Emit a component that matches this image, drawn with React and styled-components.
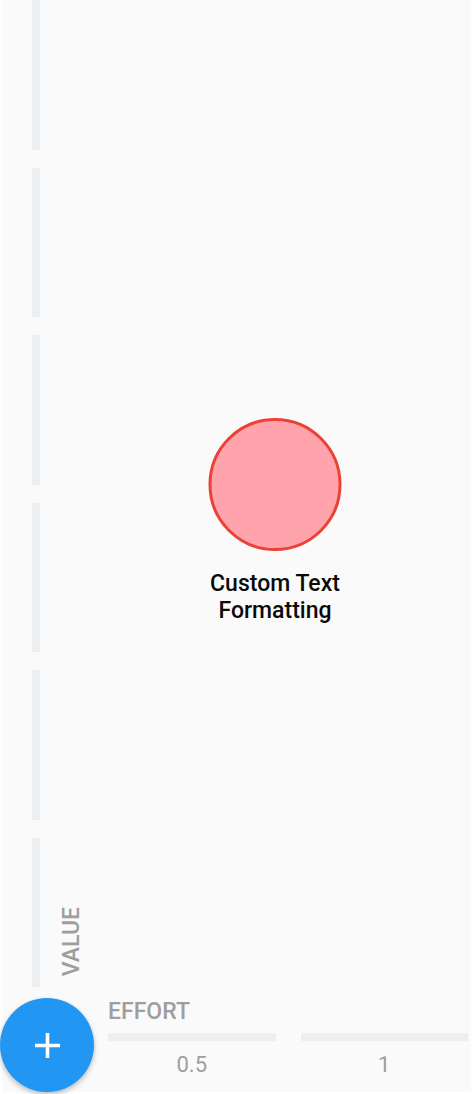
import * as React from 'react'
import styled, { createGlobalStyle } from 'styled-components'
import { MdAdd } from 'react-icons/md'

const GlobalStyle = createGlobalStyle`
  html, body {
    margin: 0;
    padding: 0;
    background: #ffffff;
  }
  body {
    font-family: Roboto, "Noto Sans", "Liberation Sans", sans-serif;
  }
`

const Frame = styled.div`
  box-sizing: border-box;
  height: 1094px;
  padding: 0 3px 2px 2px;
  background: #ffffff;
`

const Chart = styled.div`
  display: grid;
  grid-template-columns: 30px 8px 1fr;
  grid-template-rows: 987px 1fr;
  height: 100%;
  background: #fafafa;
`

const YAxis = styled.div`
  grid-column: 2;
  grid-row: 1;
  display: flex;
  flex-direction: column;
  gap: 18px;
`

const YSegment = styled.div`
  flex: 1;
  background: #eceff1;
`

const Plot = styled.div`
  grid-column: 3;
  grid-row: 1;
  position: relative;
  display: flex;
  flex-direction: column;
  justify-content: flex-end;
  align-items: flex-start;
  padding: 0 0 11px 19px;
`

const YTitle = styled.div`
  writing-mode: vertical-rl;
  transform: rotate(180deg);
  font-size: 23px;
  font-weight: 500;
  line-height: 26px;
  color: #9e9e9e;
`

const Bubble = styled.div`
  position: absolute;
  display: flex;
  flex-direction: column;
  align-items: center;
  gap: 19px;
  transform: translate(-50%, -66px);
`

const Dot = styled.div`
  box-sizing: border-box;
  width: ${(p) => p.$size}px;
  height: ${(p) => p.$size}px;
  border-radius: 50%;
  background: #ffa4ac;
  border: 3px solid #ec4137;
`

const BubbleLabel = styled.div`
  font-size: 23px;
  font-weight: 500;
  line-height: 27px;
  color: #0a0a0a;
  text-align: center;
  white-space: pre-line;
`

const XAxis = styled.div`
  grid-column: 3;
  grid-row: 2;
  padding: 12px 3px 0 68px;
`

const XTitle = styled.div`
  font-size: 23px;
  font-weight: 500;
  line-height: 26px;
  color: #9e9e9e;
`

const XTicks = styled.div`
  display: grid;
  grid-template-columns: 1fr 1fr;
  column-gap: 25px;
  margin-top: 8px;
`

const XTick = styled.div`
  display: flex;
  flex-direction: column;
  align-items: center;
  gap: 11px;
`

const XBar = styled.div`
  align-self: stretch;
  height: 8px;
  background: #eceff1;
`

const XLabel = styled.div`
  font-size: 22px;
  line-height: 26px;
  color: #9e9e9e;
`

const Fab = styled.button`
  position: fixed;
  left: 0;
  bottom: 2px;
  width: 94px;
  height: 94px;
  border: none;
  border-radius: 50%;
  background: #2196f3;
  color: #ffffff;
  display: flex;
  align-items: center;
  justify-content: center;
  padding: 0;
  box-shadow: 0 3px 6px rgba(0, 0, 0, 0.16), 0 2px 4px rgba(0, 0, 0, 0.12);
  cursor: pointer;
`

const items = [
  { id: 1, label: 'Custom Text\nFormatting', x: 235, y: 484, size: 133 },
]

const ticks = ['0.5', '1']

export default function App() {
  return (
    <>
      <GlobalStyle />
      <Frame>
        <Chart>
          <YAxis>
            {[0, 1, 2, 3, 4, 5].map((i) => (
              <YSegment key={i} />
            ))}
          </YAxis>
          <Plot>
            {items.map((item) => (
              <Bubble key={item.id} style={{ left: item.x, top: item.y }}>
                <Dot $size={item.size} />
                <BubbleLabel>{item.label}</BubbleLabel>
              </Bubble>
            ))}
            <YTitle>VALUE</YTitle>
          </Plot>
          <XAxis>
            <XTitle>EFFORT</XTitle>
            <XTicks>
              {ticks.map((t) => (
                <XTick key={t}>
                  <XBar />
                  <XLabel>{t}</XLabel>
                </XTick>
              ))}
            </XTicks>
          </XAxis>
        </Chart>
      </Frame>
      <Fab aria-label="Add">
        <MdAdd size={43} />
      </Fab>
    </>
  )
}
